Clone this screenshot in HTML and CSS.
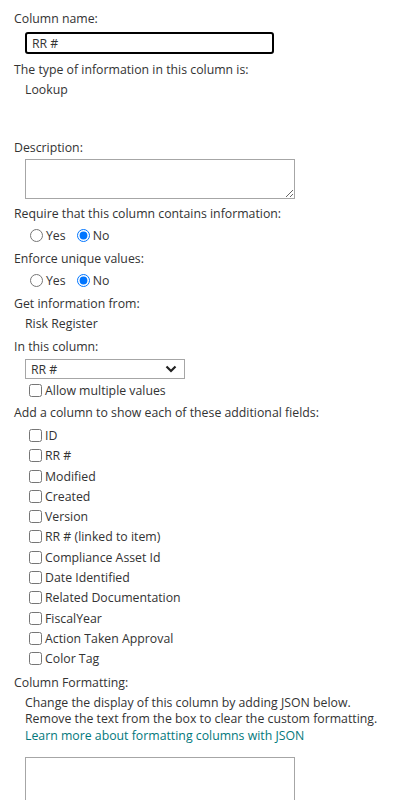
FILE: index.html
```html
<!DOCTYPE html>
<html lang="en">
<head>
    <meta charset="UTF-8">
    <meta name="viewport" content="width=device-width, initial-scale=1.0">
    <title>Column settings</title>
    <link rel="stylesheet" href="styles.css">
</head>
<body>

<div class="form">
    <div class="label">Column name:</div>
    <div class="indent">
        <input class="name-input" type="text" value="RR #">
    </div>

    <div class="label">The type of information in this column is:</div>
    <div class="indent value">Lookup</div>

    <div class="label desc-label">Description:</div>
    <div class="indent">
        <textarea class="desc-box"></textarea>
    </div>

    <div class="label">Require that this column contains information:</div>
    <div class="indent radios">
        <label><input type="radio" name="required">Yes</label>
        <label><input type="radio" name="required" checked>No</label>
    </div>

    <div class="label">Enforce unique values:</div>
    <div class="indent radios">
        <label><input type="radio" name="unique">Yes</label>
        <label><input type="radio" name="unique" checked>No</label>
    </div>

    <div class="label source-label">Get information from:</div>
    <div class="indent value">Risk Register</div>

    <div class="label column-label">In this column:</div>
    <div class="indent">
        <div class="select-wrap">
            <select class="col-select">
                <option>RR #</option>
            </select>
            <svg class="chevron" width="12" height="8" viewBox="0 0 12 8">
                <path d="M1.5 1.5 L6 6 L10.5 1.5" fill="none" stroke="#222" stroke-width="2.2"/>
            </svg>
        </div>
        <label class="check multi"><input type="checkbox">Allow multiple values</label>
    </div>

    <div class="label fields-label">Add a column to show each of these additional fields:</div>
    <div class="indent fields">
        <label class="check"><input type="checkbox">ID</label>
        <label class="check"><input type="checkbox">RR #</label>
        <label class="check"><input type="checkbox">Modified</label>
        <label class="check"><input type="checkbox">Created</label>
        <label class="check"><input type="checkbox">Version</label>
        <label class="check"><input type="checkbox">RR # (linked to item)</label>
        <label class="check"><input type="checkbox">Compliance Asset Id</label>
        <label class="check"><input type="checkbox">Date Identified</label>
        <label class="check"><input type="checkbox">Related Documentation</label>
        <label class="check"><input type="checkbox">FiscalYear</label>
        <label class="check"><input type="checkbox">Action Taken Approval</label>
        <label class="check"><input type="checkbox">Color Tag</label>
    </div>

    <div class="label format-label">Column Formatting:</div>
    <div class="indent help">
        <div>Change the display of this column by adding JSON below.</div>
        <div>Remove the text from the box to clear the custom formatting.</div>
        <a href="#" class="learn">Learn more about formatting columns with JSON</a>
    </div>
    <div class="indent">
        <textarea class="json-box"></textarea>
    </div>
</div>

</body>
</html>
```

FILE: styles.css
```css
body {
    margin: 0;
    font-family: "Open Sans", "Noto Sans", sans-serif;
    font-size: 12.3px;
    color: #333;
    background-color: #fff;
}
.form {
    padding: 9px 0 0 14px;
}
.label {
    line-height: 20px;
}
.indent {
    padding-left: 11px;
}
.value {
    line-height: 20px;
}
.name-input {
    display: block;
    box-sizing: border-box;
    width: 249px;
    height: 22px;
    margin: 3px 0 6px;
    padding: 0 0 0 5px;
    border: 2px solid #000;
    border-radius: 3px;
    font-family: inherit;
    font-size: 12.3px;
    color: #333;
    outline: none;
}
.desc-label {
    margin-top: 38px;
}
.desc-box {
    display: block;
    box-sizing: border-box;
    width: 270px;
    height: 40px;
    margin: 1px 0 5px;
    border: 1px solid #a6a6a6;
    border-radius: 0;
    font-family: inherit;
}
.radios {
    display: flex;
    align-items: center;
    height: 20px;
    margin: 1px 0 4px;
}
.radios label {
    display: flex;
    align-items: center;
    margin-right: 6px;
}
.radios input {
    margin: 0 3px 0 5px;
    width: 13px;
    height: 13px;
}
.source-label {
    margin-top: 2px;
}
.column-label {
    margin-top: 3px;
}
.select-wrap {
    position: relative;
    width: 160px;
    height: 20px;
    margin-top: 2px;
}
.col-select {
    appearance: none;
    box-sizing: border-box;
    width: 160px;
    height: 20px;
    padding: 0 0 0 5px;
    border: 1px solid #a6a6a6;
    border-radius: 0;
    background: #fff;
    font-family: inherit;
    font-size: 12.3px;
    color: #333;
}
.chevron {
    position: absolute;
    right: 8px;
    top: 6px;
    pointer-events: none;
}
.check {
    display: flex;
    align-items: center;
    height: 20.3px;
}
.check input {
    margin: 0 3px 0 4px;
    width: 13px;
    height: 13px;
}
.multi {
    margin-top: 1px;
}
.fields-label {
    margin-top: 3px;
}
.fields {
    margin-top: 2px;
}
.format-label {
    margin-top: 4px;
}
.help {
    line-height: 16.5px;
    margin-top: 2px;
}
.learn {
    color: #03787c;
    text-decoration: none;
}
.json-box {
    display: block;
    box-sizing: border-box;
    width: 270px;
    height: 60px;
    margin-top: 13px;
    border: 1px solid #a6a6a6;
    border-radius: 0;
    resize: none;
}
```
